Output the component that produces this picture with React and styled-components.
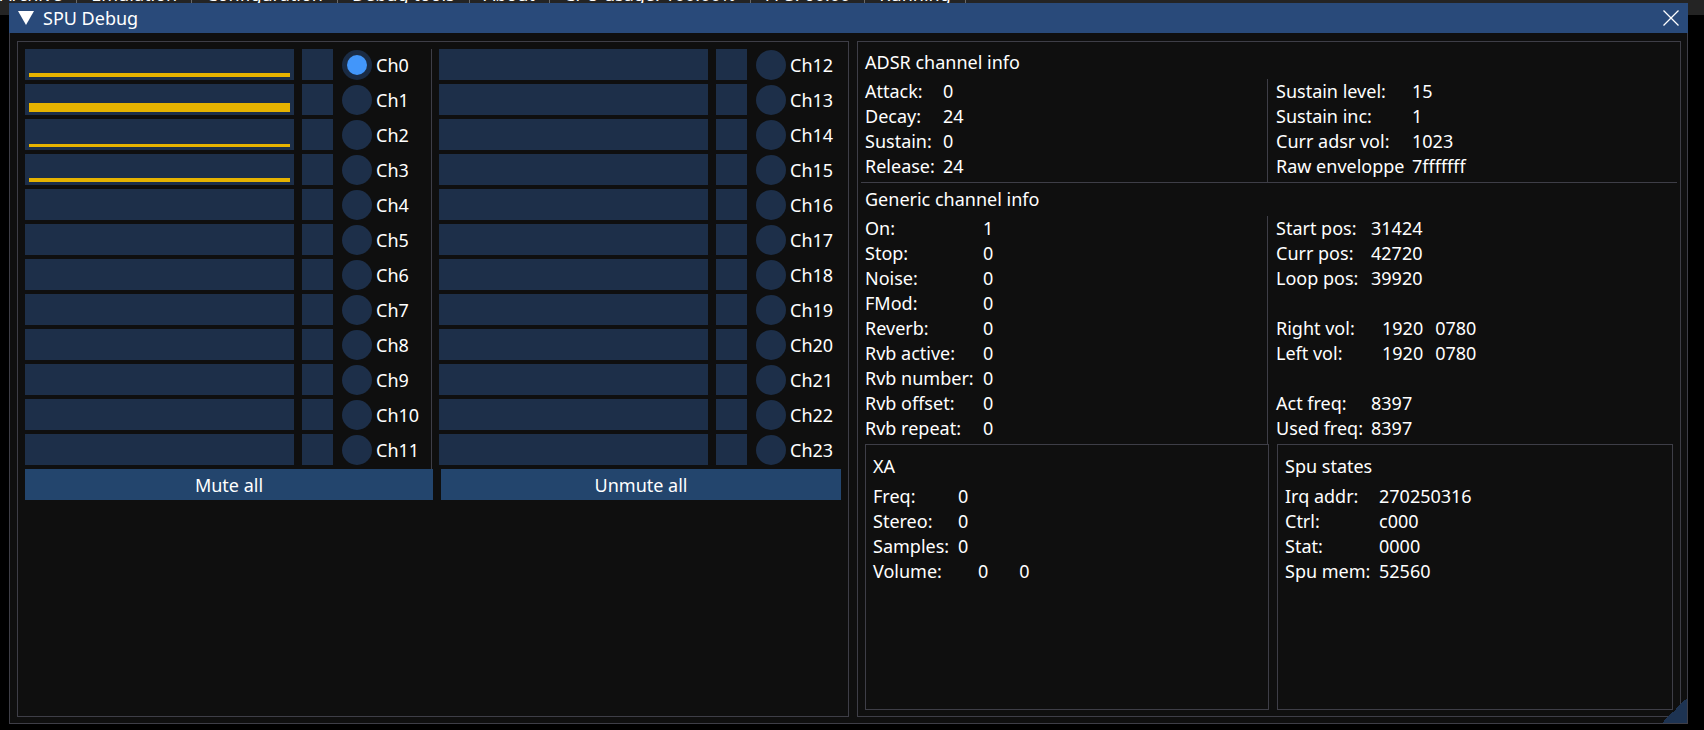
import React from 'react';
import styled, { createGlobalStyle } from 'styled-components';

const GlobalStyle = createGlobalStyle`
  html, body {
    margin: 0;
    padding: 0;
    background: #000;
  }
  body {
    font-family: "Noto Sans", "Open Sans", sans-serif;
    font-size: 18px;
    color: #fff;
  }
  * { box-sizing: border-box; }
`;

const leftChannels = [
  { name: 'Ch0', level: 4, active: true },
  { name: 'Ch1', level: 9 },
  { name: 'Ch2', level: 3 },
  { name: 'Ch3', level: 4 },
  ...[4, 5, 6, 7, 8, 9, 10, 11].map(n => ({ name: `Ch${n}`, level: 0 })),
];
const rightChannels = Array.from({ length: 12 }, (_, i) => ({ name: `Ch${i + 12}`, level: 0 }));

const menuItems = ['Archive', 'Emulation', 'Configuration', 'Debug tools', 'About', 'CPU usage: 100.00%', 'FPS: 60.00', 'Running'];

const Screen = styled.div`
  position: relative;
  width: 1704px;
  height: 730px;
  overflow: hidden;
  background: #000;
`;

const MenuBar = styled.div`
  height: 15px;
  background: #242424;
  overflow: hidden;
  display: flex;
`;

const MenuItem = styled.div`
  margin-top: -18px;
  line-height: 25px;
  padding: 0 14px 0 ${p => (p.$first ? 0 : 14)}px;
  border-right: 1px solid #6a6a6a;
  white-space: nowrap;
  height: 40px;
`;

const Window = styled.div`
  position: absolute;
  left: 9px;
  top: 3px;
  width: 1679px;
  height: 721px;
  display: flex;
  flex-direction: column;
  background: #0f0f0f;
`;

const TitleBar = styled.div`
  height: 30px;
  flex: none;
  display: flex;
  align-items: center;
  background: #294a7a;
  padding: 0 9px;
`;

const TitleText = styled.span`
  margin-left: 9px;
  line-height: 25px;
  flex: 1;
`;

const Body = styled.div`
  flex: 1;
  display: flex;
  gap: 8px;
  padding: 8px 6px 6px 7px;
  border: 1px solid #3e3e47;
  border-top: none;
  position: relative;
  min-height: 0;
`;

const ResizeGrip = styled.div`
  position: absolute;
  right: 0;
  bottom: 0;
  width: 25px;
  height: 25px;
  background: linear-gradient(to top left, #1d3352 50%, transparent 50%);
`;

const Child = styled.div`
  border: 1px solid #3e3e47;
  padding: 7px;
  display: flex;
  flex-direction: column;
  ${p => (p.$width ? `width: ${p.$width}px; flex: none;` : 'flex: 1;')}
`;

const ChannelColumns = styled.div`
  display: grid;
  grid-template-columns: 407px 1fr;
`;

const ChannelList = styled.div`
  display: flex;
  flex-direction: column;
  gap: 4px;
  padding: 0 0 4px ${p => (p.$second ? 7 : 0)}px;
  border-right: ${p => (p.$second ? 'none' : '1px solid #3e3e47')};
`;

const ChannelRow = styled.div`
  display: flex;
  align-items: center;
  height: 31px;
`;

const Plot = styled.div`
  position: relative;
  width: 269px;
  height: 31px;
  background: #1d2f49;
`;

const PlotFill = styled.div`
  position: absolute;
  left: 4px;
  right: 4px;
  bottom: 3px;
  background: #e6b300;
`;

const SmallFrame = styled.div`
  width: 31px;
  height: 31px;
  margin-left: 8px;
  background: #1d2f49;
`;

const Radio = styled.div`
  width: 30px;
  height: 30px;
  margin-left: 9px;
  border-radius: 50%;
  background: ${p => (p.$active ? '#1a2b44' : '#1d2f49')};
  display: flex;
  align-items: center;
  justify-content: center;
  &::after {
    content: '';
    width: 20px;
    height: 20px;
    border-radius: 50%;
    background: #4296fa;
    display: ${p => (p.$active ? 'block' : 'none')};
  }
`;

const RadioLabel = styled.span`
  margin-left: 4px;
  line-height: 25px;
  padding-top: 1px;
`;

const ButtonRow = styled.div`
  display: grid;
  grid-template-columns: 408px 1fr;
  gap: 8px;
`;

const Button = styled.button`
  height: 31px;
  border: none;
  background: #23456d;
  color: #fff;
  font: inherit;
  font-size: 18px;
  padding: 0;
  cursor: pointer;
`;

const SectionTitle = styled.div`
  line-height: 25px;
  margin-top: ${p => p.$top || 0}px;
`;

const Columns = styled.div`
  display: grid;
  grid-template-columns: 402px 1fr;
  margin-top: 4px;
  padding-bottom: ${p => p.$pad || 0}px;
`;

const Column = styled.div`
  display: flex;
  flex-direction: column;
  ${p => p.$right && 'border-left: 1px solid #3e3e47; padding-left: 8px; margin-bottom: -3px; padding-bottom: 3px;'}
`;

const Separator = styled.div`
  height: 1px;
  background: #3e3e47;
  margin: 0 -4px;
`;

const KV = styled.div`
  display: grid;
  grid-template-columns: ${p => p.$w}px auto;
  line-height: 25px;
  height: 25px;
  white-space: nowrap;
`;

const Multi = styled.span`
  display: flex;
  padding-left: ${p => p.$lead}px;
  gap: ${p => p.$gap}px;
`;

const Boxes = styled.div`
  flex: 1;
  display: grid;
  grid-template-columns: 404px 1fr;
  gap: 8px;
  margin-bottom: -1px;
`;

const Box = styled.div`
  border: 1px solid #3e3e47;
  padding: 9px 7px 8px;
`;

const BoxRows = styled.div`
  margin-top: 5px;
`;

function Info({ rows, w }) {
  return rows.map((r, i) => (
    <KV key={i} $w={w}>
      <span>{r[0]}</span>
      {Array.isArray(r[1]) ? (
        <Multi $lead={r[2]} $gap={r[3]}>
          {r[1].map((v, j) => <span key={j}>{v}</span>)}
        </Multi>
      ) : (
        <span>{r[1]}</span>
      )}
    </KV>
  ));
}

function Channel({ ch }) {
  return (
    <ChannelRow>
      <Plot>{ch.level > 0 && <PlotFill style={{ height: ch.level }} />}</Plot>
      <SmallFrame />
      <Radio $active={ch.active} />
      <RadioLabel>{ch.name}</RadioLabel>
    </ChannelRow>
  );
}

export default function App() {
  return (
    <Screen>
      <GlobalStyle />
      <MenuBar>
        {menuItems.map((m, i) => (
          <MenuItem key={m} $first={i === 0}>{m}</MenuItem>
        ))}
      </MenuBar>
      <Window>
        <TitleBar>
          <svg width="16" height="14" viewBox="0 0 16 14">
            <polygon points="0,0 16,0 8,14" fill="#fff" />
          </svg>
          <TitleText>SPU Debug</TitleText>
          <svg width="16" height="16" viewBox="0 0 16 16">
            <path d="M0.5 0.5 L15.5 15.5 M15.5 0.5 L0.5 15.5" stroke="#fff" strokeWidth="1.3" />
          </svg>
        </TitleBar>
        <Body>
          <Child $width={832}>
            <ChannelColumns>
              <ChannelList>
                {leftChannels.map(ch => <Channel key={ch.name} ch={ch} />)}
              </ChannelList>
              <ChannelList $second>
                {rightChannels.map(ch => <Channel key={ch.name} ch={ch} />)}
              </ChannelList>
            </ChannelColumns>
            <ButtonRow>
              <Button>Mute all</Button>
              <Button>Unmute all</Button>
            </ButtonRow>
          </Child>
          <Child>
            <SectionTitle $top={1}>ADSR channel info</SectionTitle>
            <Columns $pad={3}>
              <Column>
                <Info w={78} rows={[['Attack:', '0'], ['Decay:', '24'], ['Sustain:', '0'], ['Release:', '24']]} />
              </Column>
              <Column $right>
                <Info
                  w={136}
                  rows={[['Sustain level:', '15'], ['Sustain inc:', '1'], ['Curr adsr vol:', '1023'], ['Raw enveloppe', '7fffffff']]}
                />
              </Column>
            </Columns>
            <Separator />
            <SectionTitle $top={4}>Generic channel info</SectionTitle>
            <Columns $pad={3}>
              <Column>
                <Info
                  w={118}
                  rows={[
                    ['On:', '1'], ['Stop:', '0'], ['Noise:', '0'], ['FMod:', '0'], ['Reverb:', '0'],
                    ['Rvb active:', '0'], ['Rvb number:', '0'], ['Rvb offset:', '0'], ['Rvb repeat:', '0'],
                  ]}
                />
              </Column>
              <Column $right>
                <Info
                  w={95}
                  rows={[
                    ['Start pos:', '31424'], ['Curr pos:', '42720'], ['Loop pos:', '39920'], ['', ''],
                    ['Right vol:', ['1920', '0780'], 11, 12], ['Left vol:', ['1920', '0780'], 11, 12], ['', ''],
                    ['Act freq:', '8397'], ['Used freq:', '8397'],
                  ]}
                />
              </Column>
            </Columns>
            <Boxes>
              <Box>
                <SectionTitle>XA</SectionTitle>
                <BoxRows>
                  <Info
                    w={85}
                    rows={[['Freq:', '0'], ['Stereo:', '0'], ['Samples:', '0'], ['Volume:', ['0', '0'], 20, 31]]}
                  />
                </BoxRows>
              </Box>
              <Box>
                <SectionTitle>Spu states</SectionTitle>
                <BoxRows>
                  <Info
                    w={94}
                    rows={[['Irq addr:', '270250316'], ['Ctrl:', 'c000'], ['Stat:', '0000'], ['Spu mem:', '52560']]}
                  />
                </BoxRows>
              </Box>
            </Boxes>
          </Child>
          <ResizeGrip />
        </Body>
      </Window>
    </Screen>
  );
}
